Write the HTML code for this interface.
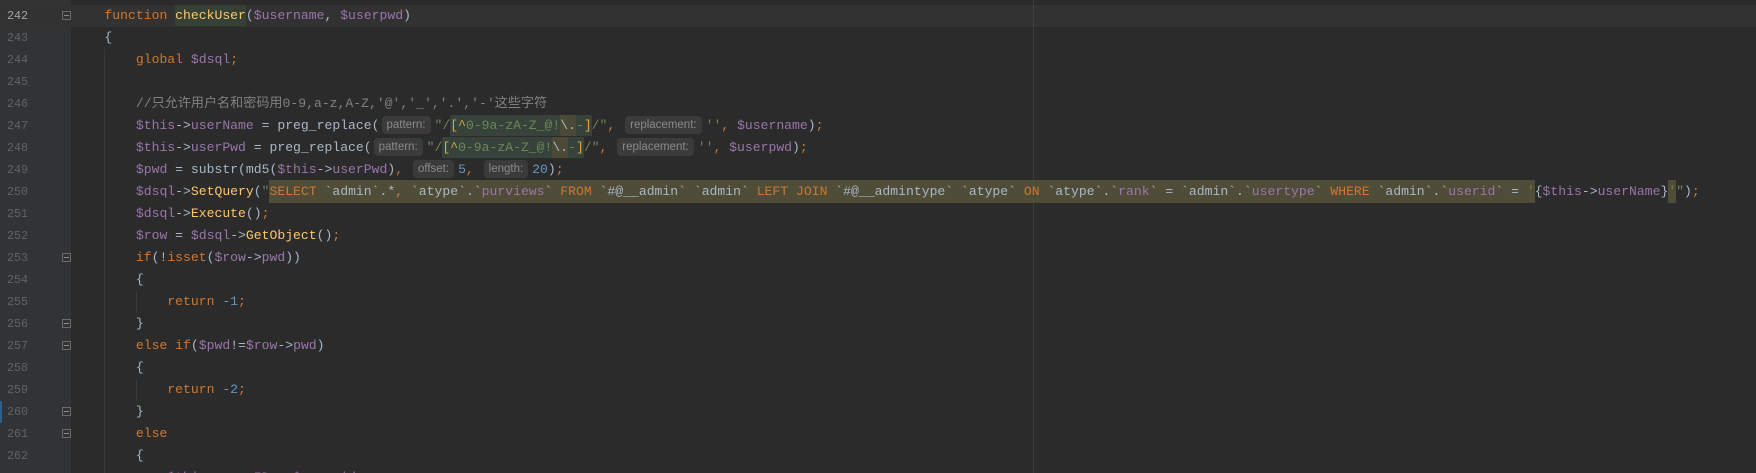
<!DOCTYPE html>
<html><head><meta charset="utf-8"><style>
html,body{margin:0;width:1756px;height:473px;overflow:hidden;}
body{background:#2b2b2b;position:relative;font-family:"Liberation Mono","Noto Sans CJK SC",monospace;}
.gut{position:absolute;left:0;top:0;width:71px;height:473px;background:#313335;}
.cur{position:absolute;left:0;top:5px;width:1756px;height:22px;background:#323232;}
.ln{position:absolute;left:0;width:28px;text-align:right;font-size:11.7px;color:#606366;line-height:22px;}
.code{position:absolute;left:73px;font-size:13.1px;line-height:22px;white-space:pre;color:#a9b7c6;}
.k{color:#cc7832}.f{color:#ffc66d}.v{color:#9876aa}.s{color:#6a8759}.n{color:#6897bb}.c{color:#808080}
.y{color:#d7a848}
.hint{display:inline-block;font-family:"Liberation Sans",sans-serif;font-size:11.5px;color:#8a8a8a;background:#3b3b3b;border-radius:4px;padding:0 5px;line-height:18px;margin:0 4px 0 2px;vertical-align:1px;}
.rg{background:#37433a;padding:3px 0}
.rd{background:#4a4a36;padding:3px 0}
.sq{background:#4f4d38;padding:4px 0}
.hl{background:#344134;padding:3px 0}
.guide{position:absolute;width:1px;background:#393939;}
.fold{position:absolute;left:62px;width:9px;height:9px;border:1px solid #6a6a6a;box-sizing:border-box;}
.fold:after{content:"";position:absolute;left:1px;top:3px;width:5px;height:1px;background:#8a8a8a;}
</style></head><body>
<div class="gut"></div>
<div class="cur"></div>
<div style="position:absolute;left:1033px;top:0;width:1px;height:473px;background:#3d3d3d"></div>
<div style="position:absolute;left:0;top:401px;width:2px;height:22px;background:#2f5f8a"></div>
<div class="guide" style="left:104px;top:49px;height:424px"></div>
<div class="guide" style="left:136px;top:291px;height:22px"></div>
<div class="guide" style="left:136px;top:379px;height:22px"></div>
<div class="fold" style="top:11px"></div>
<div class="fold" style="top:253px"></div>
<div class="fold" style="top:319px"></div>
<div class="fold" style="top:341px"></div>
<div class="fold" style="top:407px"></div>
<div class="fold" style="top:429px"></div>
<div style="position:absolute;left:176px;top:7px;width:2px;height:18px;background:#bbbbbb"></div>

<div class="ln" style="top:5px;color:#a4a3a3">242</div>
<div class="ln" style="top:27px">243</div>
<div class="ln" style="top:49px">244</div>
<div class="ln" style="top:71px">245</div>
<div class="ln" style="top:93px">246</div>
<div class="ln" style="top:115px">247</div>
<div class="ln" style="top:137px">248</div>
<div class="ln" style="top:159px">249</div>
<div class="ln" style="top:181px">250</div>
<div class="ln" style="top:203px">251</div>
<div class="ln" style="top:225px">252</div>
<div class="ln" style="top:247px">253</div>
<div class="ln" style="top:269px">254</div>
<div class="ln" style="top:291px">255</div>
<div class="ln" style="top:313px">256</div>
<div class="ln" style="top:335px">257</div>
<div class="ln" style="top:357px">258</div>
<div class="ln" style="top:379px">259</div>
<div class="ln" style="top:401px">260</div>
<div class="ln" style="top:423px">261</div>
<div class="ln" style="top:445px">262</div>
<div class="ln" style="top:467px">263</div>

<div class="code" style="top:5px">    <span class="k">function</span> <span class="f hl">checkUser</span>(<span class="v">$username</span>, <span class="v">$userpwd</span>)</div>
<div class="code" style="top:27px">    {</div>
<div class="code" style="top:49px">        <span class="k">global</span> <span class="v">$dsql</span><span class="k">;</span></div>
<div class="code" style="top:93px">        <span class="c">//只允许用户名和密码用0-9,a-z,A-Z,'@','_','.','-'这些字符</span></div>
<div class="code" style="top:115px">        <span class="v">$this</span>-&gt;<span class="v">userName</span> = preg_replace(<span class="hint">pattern:</span><span class="s">"/<span class="rg"><span class="y">[^</span>0-9a-zA-Z_@!<span class="rd" style="color:#a9b7c6">\.</span>-<span class="y">]</span></span>/"</span><span class="k">,</span> <span class="hint">replacement:</span><span class="s">''</span><span class="k">,</span> <span class="v">$username</span>)<span class="k">;</span></div>
<div class="code" style="top:137px">        <span class="v">$this</span>-&gt;<span class="v">userPwd</span> = preg_replace(<span class="hint">pattern:</span><span class="s">"/<span class="rg"><span class="y">[^</span>0-9a-zA-Z_@!<span class="rd" style="color:#a9b7c6">\.</span>-<span class="y">]</span></span>/"</span><span class="k">,</span> <span class="hint">replacement:</span><span class="s">''</span><span class="k">,</span> <span class="v">$userpwd</span>)<span class="k">;</span></div>
<div class="code" style="top:159px">        <span class="v">$pwd</span> = substr(md5(<span class="v">$this</span>-&gt;<span class="v">userPwd</span>)<span class="k">,</span> <span class="hint">offset:</span><span class="n">5</span><span class="k">,</span> <span class="hint">length:</span><span class="n">20</span>)<span class="k">;</span></div>
<div class="code" style="top:181px">        <span class="v">$dsql</span>-&gt;<span class="f">SetQuery</span>(<span class="s">"</span><span class="sq"><span class="k">SELECT</span> `admin`.*<span class="k">,</span> `atype`.`<span class="v">purviews</span>` <span class="k">FROM</span> `#@__admin` `admin` <span class="k">LEFT JOIN</span> `#@__admintype` `atype` <span class="k">ON</span> `atype`.`<span class="v">rank</span>` = `admin`.`<span class="v">usertype</span>` <span class="k">WHERE</span> `admin`.`<span class="v">userid</span>` = <span class="s">'</span></span>{<span class="v">$this</span>-&gt;<span class="v">userName</span>}<span class="sq s">'</span><span class="s">"</span>)<span class="k">;</span></div>
<div class="code" style="top:203px">        <span class="v">$dsql</span>-&gt;<span class="f">Execute</span>()<span class="k">;</span></div>
<div class="code" style="top:225px">        <span class="v">$row</span> = <span class="v">$dsql</span>-&gt;<span class="f">GetObject</span>()<span class="k">;</span></div>
<div class="code" style="top:247px">        <span class="k">if</span>(!<span class="k">isset</span>(<span class="v">$row</span>-&gt;<span class="v">pwd</span>))</div>
<div class="code" style="top:269px">        {</div>
<div class="code" style="top:291px">            <span class="k">return</span> <span class="n">-1</span><span class="k">;</span></div>
<div class="code" style="top:313px">        }</div>
<div class="code" style="top:335px">        <span class="k">else if</span>(<span class="v">$pwd</span>!=<span class="v">$row</span>-&gt;<span class="v">pwd</span>)</div>
<div class="code" style="top:357px">        {</div>
<div class="code" style="top:379px">            <span class="k">return</span> <span class="n">-2</span><span class="k">;</span></div>
<div class="code" style="top:401px">        }</div>
<div class="code" style="top:423px">        <span class="k">else</span></div>
<div class="code" style="top:445px">        {</div>
<div class="code" style="top:467px">            <span class="v">$this</span>-&gt;<span class="v">userID</span> = <span class="v">$row</span>-&gt;<span class="v">id</span><span class="k">;</span></div>
</body></html>
